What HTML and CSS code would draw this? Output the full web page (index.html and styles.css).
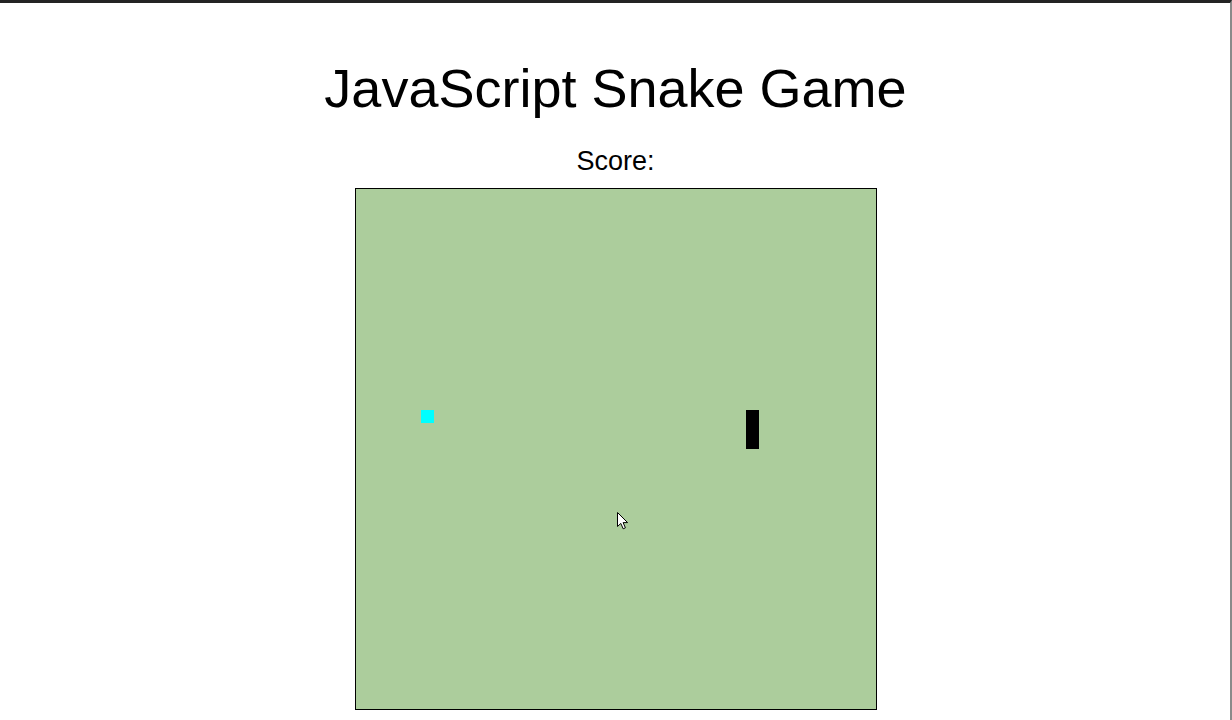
FILE: index.html
```html
<!DOCTYPE html>
<html>
<head>
<meta charset="utf-8">
<title>JavaScript Snake Game</title>
<link rel="stylesheet" href="styles.css">
</head>
<body>
<div class="page">
  <h1 class="title">JavaScript Snake Game</h1>
  <div class="score">Score:</div>
  <div class="board">
    <div class="food"></div>
    <div class="snake"></div>
    <svg class="cursor" width="12" height="18" viewBox="0 0 12 18">
      <path d="M0.5 0.5 L0.5 14.5 L3.8 11.4 L6.2 16.8 L8.4 15.8 L6.1 10.6 L10.6 10.6 Z" fill="#fff" stroke="#000" stroke-width="1"/>
    </svg>
  </div>
</div>
</body>
</html>
```
FILE: styles.css
```css
html, body {
  margin: 0;
  padding: 0;
  background: #fff;
}
.page {
  box-sizing: border-box;
  height: 720px;
  border-top: 3px solid #232323;
  border-right: 2px solid #8a8a8a;
  display: flex;
  flex-direction: column;
  align-items: center;
  font-family: "Liberation Sans", Arial, sans-serif;
  color: #000;
  overflow: hidden;
}
.title {
  margin: 54px 0 0 1px;
  font-size: 54px;
  line-height: 62px;
  font-weight: normal;
}
.score {
  margin-top: 27px;
  margin-left: 1px;
  font-size: 27px;
  line-height: 31px;
}
.board {
  position: relative;
  margin-top: 11px;
  margin-left: 2px;
  width: 520px;
  height: 520px;
  border: 1px solid #000;
  background: #accd9c;
  flex-shrink: 0;
}
.food {
  position: absolute;
  left: 65px;
  top: 221px;
  width: 13px;
  height: 13px;
  background: #00ffff;
}
.snake {
  position: absolute;
  left: 390px;
  top: 221px;
  width: 13px;
  height: 39px;
  background: #000;
}
.cursor {
  position: absolute;
  left: 261px;
  top: 323px;
}
```
